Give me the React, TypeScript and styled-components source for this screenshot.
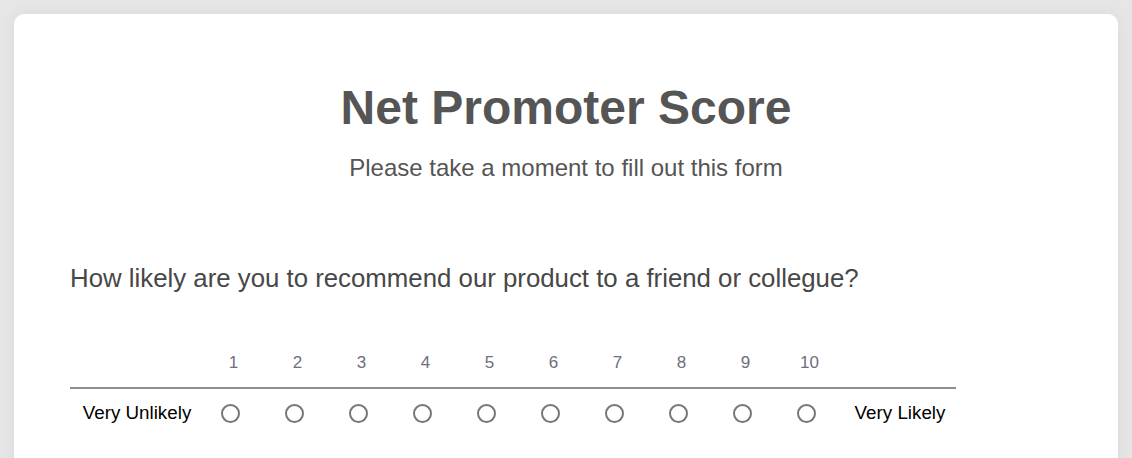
import React from "react";
import styled, { createGlobalStyle } from "styled-components";

const Global = createGlobalStyle`
  html, body {
    margin: 0;
    padding: 0;
    overflow: hidden;
    background: #e6e6e6;
    font-family: "Liberation Sans", Arial, Helvetica, sans-serif;
  }
  body {
    padding: 14px;
  }
`;

const Card = styled.div`
  width: 1104px;
  min-height: 500px;
  box-sizing: border-box;
  background: #ffffff;
  border-radius: 10px;
  box-shadow: 0 0 16px rgba(0, 0, 0, 0.06);
  padding: 66px 56px 40px 56px;
`;

const Title = styled.h1`
  margin: 0;
  text-align: center;
  font-size: 48px;
  line-height: 56px;
  font-weight: 700;
  color: #555555;
`;

const Subtitle = styled.p`
  margin: 18px 0 0 0;
  text-align: center;
  font-size: 24px;
  line-height: 28px;
  color: #555555;
`;

const Question = styled.p`
  margin: 81px 0 0 0;
  font-size: 25.8px;
  line-height: 30px;
  font-weight: 300;
  color: #474747;
`;

const Scale = styled.div`
  margin-top: 60px;
  width: 886px;
  display: grid;
  grid-template-columns: 128px repeat(10, 64px) 118px;
`;

const HeadCell = styled.div<{ $number?: boolean }>`
  padding: 0 0 14px ${(p) => (p.$number ? "7px" : "0")};
  text-align: center;
  font-size: 17px;
  line-height: 20px;
  color: #6e6e7e;
  border-bottom: 2px solid #8e8e99;
`;

const Cell = styled.div`
  height: 48px;
  display: flex;
  align-items: center;
  justify-content: center;
`;

const EdgeLabel = styled(Cell)<{ $shift?: number }>`
  font-size: 18.8px;
  color: #000000;
  padding-left: ${(p) => p.$shift ?? 0}px;
  white-space: nowrap;
`;

const Radio = styled.input`
  appearance: none;
  -webkit-appearance: none;
  margin: 0;
  width: 19px;
  height: 19px;
  box-sizing: border-box;
  border: 2px solid #767676;
  border-radius: 50%;
  background: #ffffff;
  cursor: pointer;
  &:checked {
    border: 5px solid #3478f6;
  }
`;

const scores = [1, 2, 3, 4, 5, 6, 7, 8, 9, 10];

export default function App() {
  return (
    <>
      <Global />
      <Card>
        <Title>Net Promoter Score</Title>
        <Subtitle>Please take a moment to fill out this form</Subtitle>
        <Question>
          How likely are you to recommend our product to a friend or collegue?
        </Question>
        <Scale>
          <HeadCell />
          {scores.map((n) => (
            <HeadCell key={n} $number>
              {n}
            </HeadCell>
          ))}
          <HeadCell />
          <EdgeLabel $shift={6}>Very Unlikely</EdgeLabel>
          {scores.map((n) => (
            <Cell key={n}>
              <Radio type="radio" name="nps" value={n} aria-label={String(n)} />
            </Cell>
          ))}
          <EdgeLabel $shift={6}>Very Likely</EdgeLabel>
        </Scale>
      </Card>
    </>
  );
}
